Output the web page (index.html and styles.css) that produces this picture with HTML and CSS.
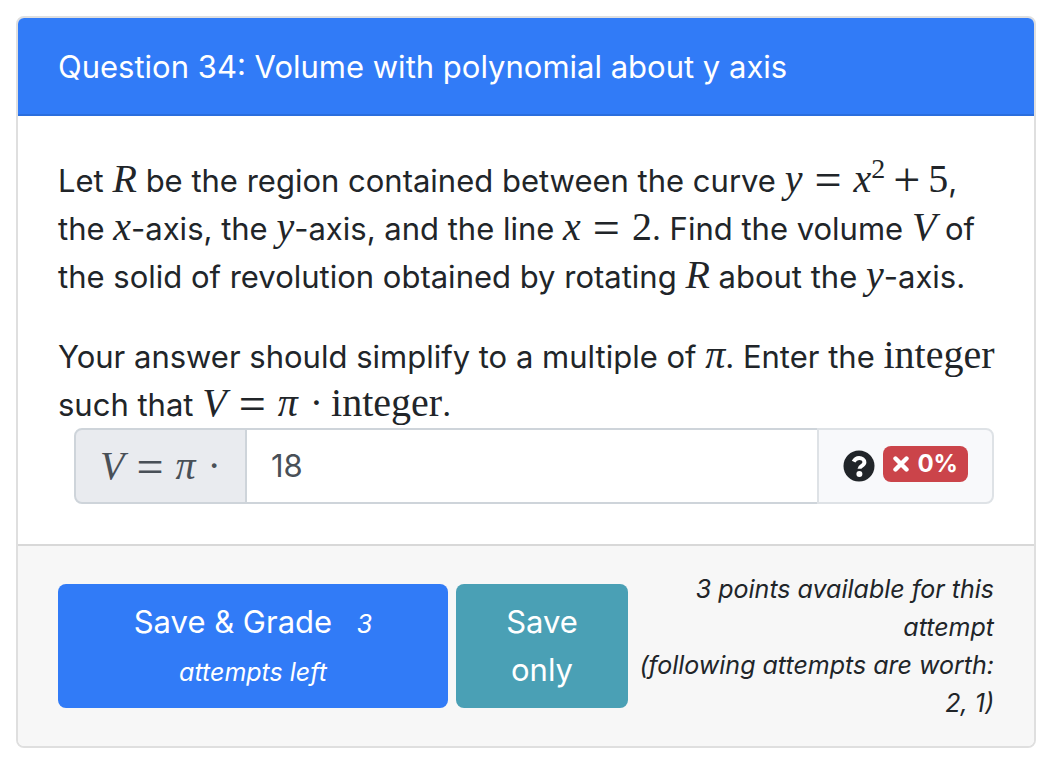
FILE: index.html
```html
<!DOCTYPE html>
<html lang="en">
<head>
    <meta charset="UTF-8">
    <meta name="viewport" content="width=device-width, initial-scale=1.0">
    <title>Question 34</title>
    <link rel="stylesheet" href="styles.css">
</head>
<body>
    <form class="card">
        <h1 class="card-header">Question 34: Volume with polynomial about y axis</h1>
        <div class="card-body">
            <p>
                Let <span class="math"><i>R</i></span> be the region contained between the curve <span class="math"><i>y</i><b>=</b><i>x</i><sup>2</sup><b class="plus">+</b>5</span>,<br>
                the <span class="math"><i>x</i></span>-axis, the <span class="math"><i>y</i></span>-axis, and the line <span class="math"><i>x</i><b>=</b>2</span>. Find the volume <span class="math"><i>V</i></span> of<br>
                the solid of revolution obtained by rotating <span class="math"><i>R</i></span> about the <span class="math"><i>y</i></span>-axis.
            </p>
            <p>
                Your answer should simplify to a multiple of <span class="math"><i>π</i></span>. Enter the <span class="math">integer</span><br>
                such that <span class="math"><i>V</i><b>=</b><i>π</i><b class="dot">·</b>integer</span>.
            </p>
            <div class="input-group">
                <label class="prepend" for="answer"><span class="math"><i>V</i><b>=</b><i>π</i><b class="dot">·</b></span></label>
                <input type="text" class="answer" id="answer" value="18">
                <div class="append">
                    <button type="button" class="help" aria-label="Help">
                        <svg viewBox="0 0 32 32">
                            <circle cx="16" cy="16" r="15.5" fill="#212529"/>
                            <path d="M10.6 11.6C11.9 9.1 13.7 8 16.1 8c3 0 5.3 1.8 5.3 4.3 0 3.7-4.9 3.4-4.9 6.5" fill="none" stroke="#fff" stroke-width="4"/>
                            <circle cx="16.4" cy="24" r="3" fill="#fff"/>
                        </svg>
                    </button>
                    <span class="badge">
                        <svg viewBox="0 0 16 16">
                            <path d="M2.5 2.5l11 11M13.5 2.5l-11 11" stroke="#fff" stroke-width="4.4" stroke-linecap="round"/>
                        </svg>
                        0%
                    </span>
                </div>
            </div>
        </div>
        <div class="card-footer">
            <button type="button" class="btn grade">Save &amp; Grade <small>3<br>attempts left</small></button>
            <button type="button" class="btn save">Save<br>only</button>
            <div class="points">
                3 points available for this<br>attempt<br>(following attempts are worth:<br>2, 1)
            </div>
        </div>
    </form>
</body>
</html>
```
FILE: styles.css
```css
*{
    box-sizing: border-box;
}
body{
    margin: 16px 14px 14px 16px;
    background-color: #fff;
    color: #212529;
    font-family: Inter, "Liberation Sans", sans-serif;
    font-size: 31px;
    line-height: 48px;
}
.card{
    border: 2px solid #dfdfdf;
    border-radius: 8px;
    overflow: hidden;
}
.card-header{
    margin: 0;
    padding: 25px 40px 23px;
    border-bottom: 2px solid #2b6edd;
    background-color: #317bf7;
    color: #fff;
    font-size: 31px;
    font-weight: 400;
}
.card-body{
    padding: 41px 40px 40px;
}
p{
    margin: 0 0 32px;
    white-space: nowrap;
}
p:nth-child(2){
    margin-bottom: 0;
}
.math{
    font-family: "Liberation Serif", serif;
    font-size: 40px;
    line-height: 0;
    white-space: nowrap;
}
.math b{
    margin: 0 12px;
    font-size: 48px;
    font-weight: 400;
    vertical-align: -4px;
}
.math .plus{
    margin: 0 8px;
}
.math .dot{
    margin: 0 8px 0 12px;
    font-size: 40px;
    vertical-align: baseline;
}
.math sup{
    font-size: 28px;
    line-height: 0;
}
.input-group{
    display: flex;
    margin: -1px 0 0 16px;
    height: 76px;
}
.prepend{
    display: flex;
    align-items: center;
    padding: 0 16px 0 24px;
    border: 2px solid #ced4da;
    border-radius: 8px 0 0 8px;
    background-color: #e9ebef;
    color: #495057;
}
.answer{
    flex: 1;
    min-width: 0;
    padding: 0 24px;
    border: solid #ced4da;
    border-width: 2px 0;
    border-radius: 0;
    background-color: #fff;
    color: #495057;
    font: inherit;
}
.append{
    display: flex;
    align-items: center;
    gap: 8px;
    padding: 0 24px;
    border: 2px solid #dee2e6;
    border-radius: 0 8px 8px 0;
    background-color: #f8f9fb;
}
.help{
    width: 32px;
    height: 32px;
    padding: 0;
    border: 0;
    background: none;
}
.help svg{
    display: block;
}
.badge{
    display: flex;
    align-items: center;
    gap: 8px;
    height: 36px;
    margin-bottom: 4px;
    padding: 0 10px;
    border-radius: 8px;
    background-color: #cb444a;
    color: #fff;
    font-size: 24px;
    font-weight: 700;
}
.badge svg{
    width: 16px;
    height: 16px;
}
.card-footer{
    display: flex;
    align-items: center;
    gap: 8px;
    padding: 24px 40px;
    border-top: 2px solid #d8d8d8;
    background-color: #f7f7f7;
}
.btn{
    padding: 14px 24px;
    border: 0;
    border-radius: 8px;
    color: #fff;
    font: inherit;
}
.grade{
    flex: 1;
    background-color: #317bf7;
}
.grade small{
    margin-left: 16px;
    font-size: 25px;
    font-style: italic;
    line-height: 24px;
}
.save{
    width: 172px;
    background-color: #4aa0b5;
}
.points{
    width: 358px;
    font-size: 25px;
    font-style: italic;
    line-height: 38px;
    text-align: right;
    white-space: nowrap;
}
```
